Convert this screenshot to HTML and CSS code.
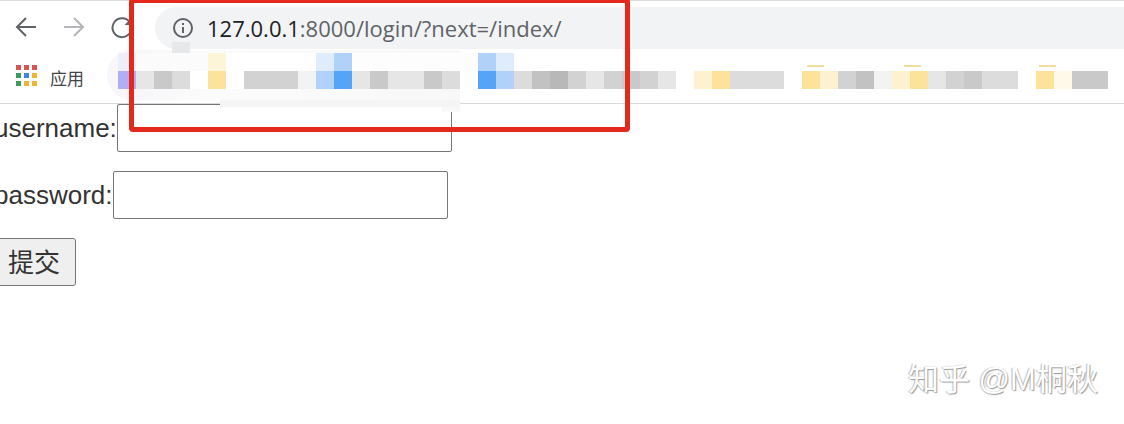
FILE: index.html
```html
<!DOCTYPE html>
<html>
    <head>
        <meta charset="utf-8" />
        <title>login</title>
        <link rel="stylesheet" href="styles.css">
    </head>
    <body>
        <!-- browser toolbar -->
        <div class="toolbar">
            <svg class="nav-icon" viewBox="0 0 24 24"><path d="M22 12H4M12 3l-9 9 9 9" /></svg>
            <svg class="nav-icon forward" viewBox="0 0 24 24"><path d="M2 12h18M12 3l9 9-9 9" /></svg>
            <svg class="nav-icon" viewBox="0 0 24 24"><path d="M20 7.500A9.500 9.500 0 1 0 21.500 12" /><path class="fill" d="M21.500 3v7h-7z" /></svg>
            <div class="address-bar">
                <svg class="info-icon" viewBox="0 0 22 22"><circle cx="11" cy="11" r="9" /><path d="M11 10v6M11 6v2" /></svg>
                <span class="url"><span class="host">127.0.0.1</span>:8000/login/?next=/index/</span>
            </div>
        </div>

        <!-- bookmarks -->
        <div class="bookmarks">
            <div class="apps">
                <i class="red"></i><i class="red"></i><i class="red"></i>
                <i class="green"></i><i class="blue"></i><i class="amber"></i>
                <i class="green"></i><i class="amber"></i><i class="amber"></i>
            </div>
            <span class="apps-label">应用</span>
        </div>

        <!-- the form -->
        <form class="login-form">
            <div class="field"><label for="username">username:</label><input type="text" id="username"></div>
            <div class="field"><label for="password">password:</label><input type="password" id="password"></div>
            <div class="field"><button type="button">提交</button></div>
        </form>

        <!-- pixelated bookmark names -->
        <div class="smear"></div>
        <div class="smear-low"></div>
        <div class="smear-end"></div>
        <div class="mosaic">
            <div class="mosaic-row top">
                <i class="l1"></i><i class="w4"></i><i class="y3"></i><i class="w5"></i><i class="b3"></i><i class="b2"></i><i class="w6"></i><i class="b2"></i><i class="b3"></i>
            </div>
            <div class="mosaic-row">
                <i class="l2"></i><i class="g5"></i><i class="g2"></i><i class="g4"></i><i class="w"></i><i class="y1"></i><i class="w"></i><i class="g3"></i><i class="g3"></i><i class="g3"></i><i class="g6"></i><i class="b2"></i><i class="b1"></i><i class="g5"></i><i class="g2"></i><i class="g5"></i><i class="g5"></i><i class="g2"></i><i class="g4"></i><i class="w"></i><i class="b1"></i><i class="b2"></i><i class="g4"></i><i class="g1"></i><i class="g0"></i><i class="g3"></i><i class="g5"></i><i class="g3"></i><i class="g2"></i><i class="g3"></i><i class="g5"></i><i class="w"></i><i class="y2"></i><i class="y1"></i><i class="g4"></i><i class="g4"></i><i class="g4"></i><i class="w"></i><i class="y1"></i><i class="y2"></i><i class="g3"></i><i class="g1"></i><i class="g6"></i><i class="y2"></i><i class="y1"></i><i class="g5"></i><i class="g3"></i><i class="g2"></i><i class="g4"></i><i class="g4"></i><i class="w"></i><i class="y1"></i><i class="y3"></i><i class="g2"></i><i class="g2"></i>
            </div>
        </div>
        <i class="address-tile"></i>
        <i class="tab folder-a"></i><i class="tab folder-b"></i><i class="tab folder-c"></i>

        <!-- red annotation -->
        <div class="annotation"></div>

        <div class="watermark">知乎 @M桐秋</div>
    </body>
</html>
```

FILE: styles.css
```css
body {
    margin: 0;
    width: 1124px;
    height: 424px;
    overflow: hidden;
    background-color: white;
    color: #333;
    font-family: "Liberation Sans", "Noto Sans CJK SC", sans-serif;
}

/* browser toolbar */
.toolbar {
    display: flex;
    align-items: center;
    gap: 24px;
    height: 54px;
    padding-left: 14px;
    border-top: 1px solid #dcdcdc;
}

.nav-icon {
    width: 24px;
    height: 24px;
    margin-bottom: 2px;
    fill: none;
    stroke: #5f6368;
    stroke-width: 2;
}

.nav-icon.forward {
    stroke: #b4b6b9;
}

.nav-icon .fill {
    fill: #5f6368;
    stroke: none;
}

.address-bar {
    display: flex;
    align-items: center;
    flex: 1;
    gap: 13px;
    height: 42px;
    margin-left: -3px;
    padding-left: 17px;
    border-radius: 21px 0 0 21px;
    background-color: #f1f3f4;
}

.info-icon {
    width: 22px;
    height: 22px;
    fill: none;
    stroke: #5f6368;
    stroke-width: 2;
}

.url {
    font-family: "Open Sans", "Noto Sans", sans-serif;
    font-size: 22px;
    color: #5f6368;
}

.url .host {
    color: #202124;
}

/* bookmarks */
.bookmarks {
    display: flex;
    align-items: center;
    gap: 13px;
    height: 48px;
    padding-left: 16px;
    border-bottom: 1px solid #d9d9d9;
}

.apps {
    display: grid;
    grid-template-columns: repeat(3, 5px);
    gap: 3px;
    margin-bottom: 8px;
}

.apps i {
    height: 5px;
}

.apps .red { background-color: #d9534f; }
.apps .green { background-color: #3f9a62; }
.apps .blue { background-color: #3f86e0; }
.apps .amber { background-color: #f2b233; }

.apps-label {
    margin-bottom: 4px;
    font-size: 17px;
    color: #444;
}

/* form, pushed a little past the left edge like the screenshot */
.login-form {
    display: flex;
    flex-direction: column;
    gap: 19px;
    margin-left: -6px;
    font-size: 26px;
}

.field {
    display: flex;
    align-items: center;
}

.field input {
    width: 335px;
    height: 48px;
    box-sizing: border-box;
    border: 1px solid #767676;
    border-radius: 2px;
    background-color: white;
}

.field button {
    width: 82px;
    height: 48px;
    padding: 0 2px 4px 0;
    border: 1px solid #767676;
    border-radius: 3px;
    background-color: #efefef;
    color: #333;
    font: inherit;
}

/* blur laid over the bookmark names */
.smear {
    position: absolute;
    left: 107px;
    top: 50px;
    width: 353px;
    height: 50px;
    border-radius: 25px 0 0 25px;
    background: linear-gradient(90deg, #f6f6fb, #fbfbfb 30%, #f8f8f8);
}

.smear-low {
    position: absolute;
    left: 220px;
    top: 100px;
    width: 240px;
    height: 7px;
    background-color: #f5f5f5;
}

.smear-end {
    position: absolute;
    left: 442px;
    top: 107px;
    width: 18px;
    height: 5px;
    background-color: #f8f8f8;
}

.mosaic {
    position: absolute;
    left: 118px;
    top: 53px;
}

.mosaic-row {
    display: flex;
    height: 18px;
}

.mosaic-row i {
    flex: none;
    width: 18px;
}

.mosaic-row .w { background-color: white; }
.mosaic-row .g0 { background-color: #b8b8b8; }
.mosaic-row .g1 { background-color: #c2c2c2; }
.mosaic-row .g2 { background-color: #c9c9c9; }
.mosaic-row .g3 { background-color: #d2d2d2; }
.mosaic-row .g4 { background-color: #dcdcdc; }
.mosaic-row .g5 { background-color: #e6e6e6; }
.mosaic-row .g6 { background-color: #f3f3f3; }
.mosaic-row .l1 { background-color: #eeeefb; }
.mosaic-row .l2 { background-color: #b0aef5; }
.mosaic-row .y1 { background-color: #fce29a; }
.mosaic-row .y2 { background-color: #fdf1d0; }
.mosaic-row .y3 { background-color: #fff9ea; }
.mosaic-row .b1 { background-color: #55a4f7; }
.mosaic-row .b2 { background-color: #b0d2fa; }
.mosaic-row .b3 { background-color: #dfecfb; }

.mosaic-row.top .w4 { width: 72px; background-color: #fbfbfb; }
.mosaic-row.top .w5 { width: 90px; background-color: white; }
.mosaic-row.top .w6 { width: 126px; background-color: #fdfdfd; }
.mosaic-row.top .y3 { background-color: #fdf5d8; }

.address-tile {
    position: absolute;
    left: 172px;
    top: 42px;
    width: 18px;
    height: 11px;
    background-color: #e6e8ea;
}

/* folder tabs poking out of the blur */
.tab {
    position: absolute;
    top: 65px;
    width: 17px;
    height: 2px;
    background-color: #f0dc9c;
}

.folder-a { left: 807px; }
.folder-b { left: 904px; }
.folder-c { left: 1039px; }

.annotation {
    position: absolute;
    left: 129px;
    top: -2px;
    width: 491px;
    height: 124px;
    border: 5px solid #e5281c;
    border-radius: 4px;
}

.watermark {
    position: absolute;
    left: 908px;
    top: 354px;
    font-size: 31px;
    white-space: nowrap;
    color: white;
    text-shadow: 1px 1px 1px #999, -1px 0 1px #bbb;
}
```
